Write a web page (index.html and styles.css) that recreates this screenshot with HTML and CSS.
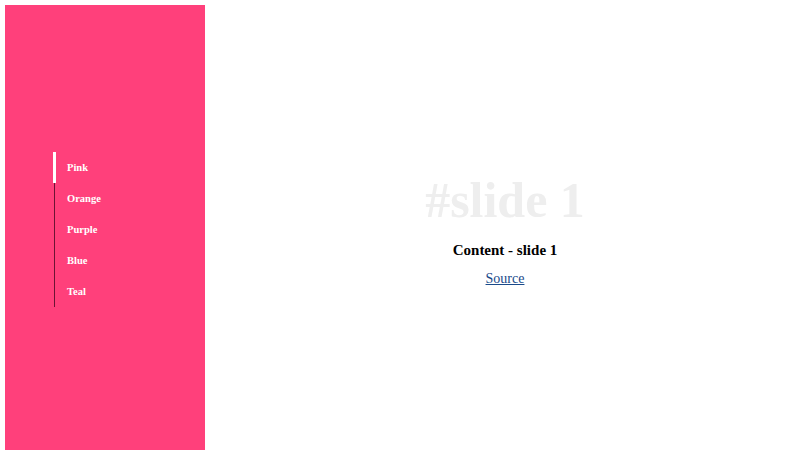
FILE: index.html
```html
<!DOCTYPE html>
<html>
<head>
<meta charset="utf-8">
<link rel="stylesheet" href="styles.css">
</head>
<body>
<div class="page">
  <aside class="sidebar">
    <ul class="nav">
      <li class="nav-item active">Pink</li>
      <li class="nav-item">Orange</li>
      <li class="nav-item">Purple</li>
      <li class="nav-item">Blue</li>
      <li class="nav-item">Teal</li>
    </ul>
  </aside>
  <main class="main">
    <div class="slide-title">#slide 1</div>
    <div class="slide-content">Content - slide 1</div>
    <a class="source" href="#">Source</a>
  </main>
</div>
</body>
</html>
```
FILE: styles.css
```css
html, body {
  margin: 0;
  padding: 0;
  overflow: hidden;
}
body {
  font-family: "Liberation Serif", "Times New Roman", serif;
  background: #fff;
  padding: 5px 0 0 5px;
}
.page {
  display: flex;
  width: 800px;
  height: 450px;
}
.sidebar {
  width: 200px;
  flex: none;
  background: #ff407b;
  display: flex;
  align-items: center;
  padding-left: 49px;
  padding-bottom: 2px;
  box-sizing: border-box;
}
.nav {
  list-style: none;
  margin: 0;
  padding: 0;
  border-left: 1px solid #6b1434;
}
.nav-item {
  position: relative;
  height: 31px;
  line-height: 31px;
  padding-left: 12px;
  color: #fff;
  font-weight: bold;
  font-size: 10.5px;
}
.nav-item.active::before {
  content: "";
  position: absolute;
  left: -2px;
  top: 0;
  width: 3px;
  height: 100%;
  background: #fff;
}
.main {
  flex: 1;
  display: flex;
  flex-direction: column;
  align-items: center;
  justify-content: center;
  padding-bottom: 1px;
}
.slide-title {
  font-size: 50px;
  font-weight: bold;
  color: #eeeeee;
  line-height: 55px;
}
.slide-content {
  font-size: 15px;
  font-weight: bold;
  color: #000;
  margin-top: 14px;
}
.source {
  font-size: 14px;
  color: #1a4a8a;
  margin-top: 12px;
}
```
